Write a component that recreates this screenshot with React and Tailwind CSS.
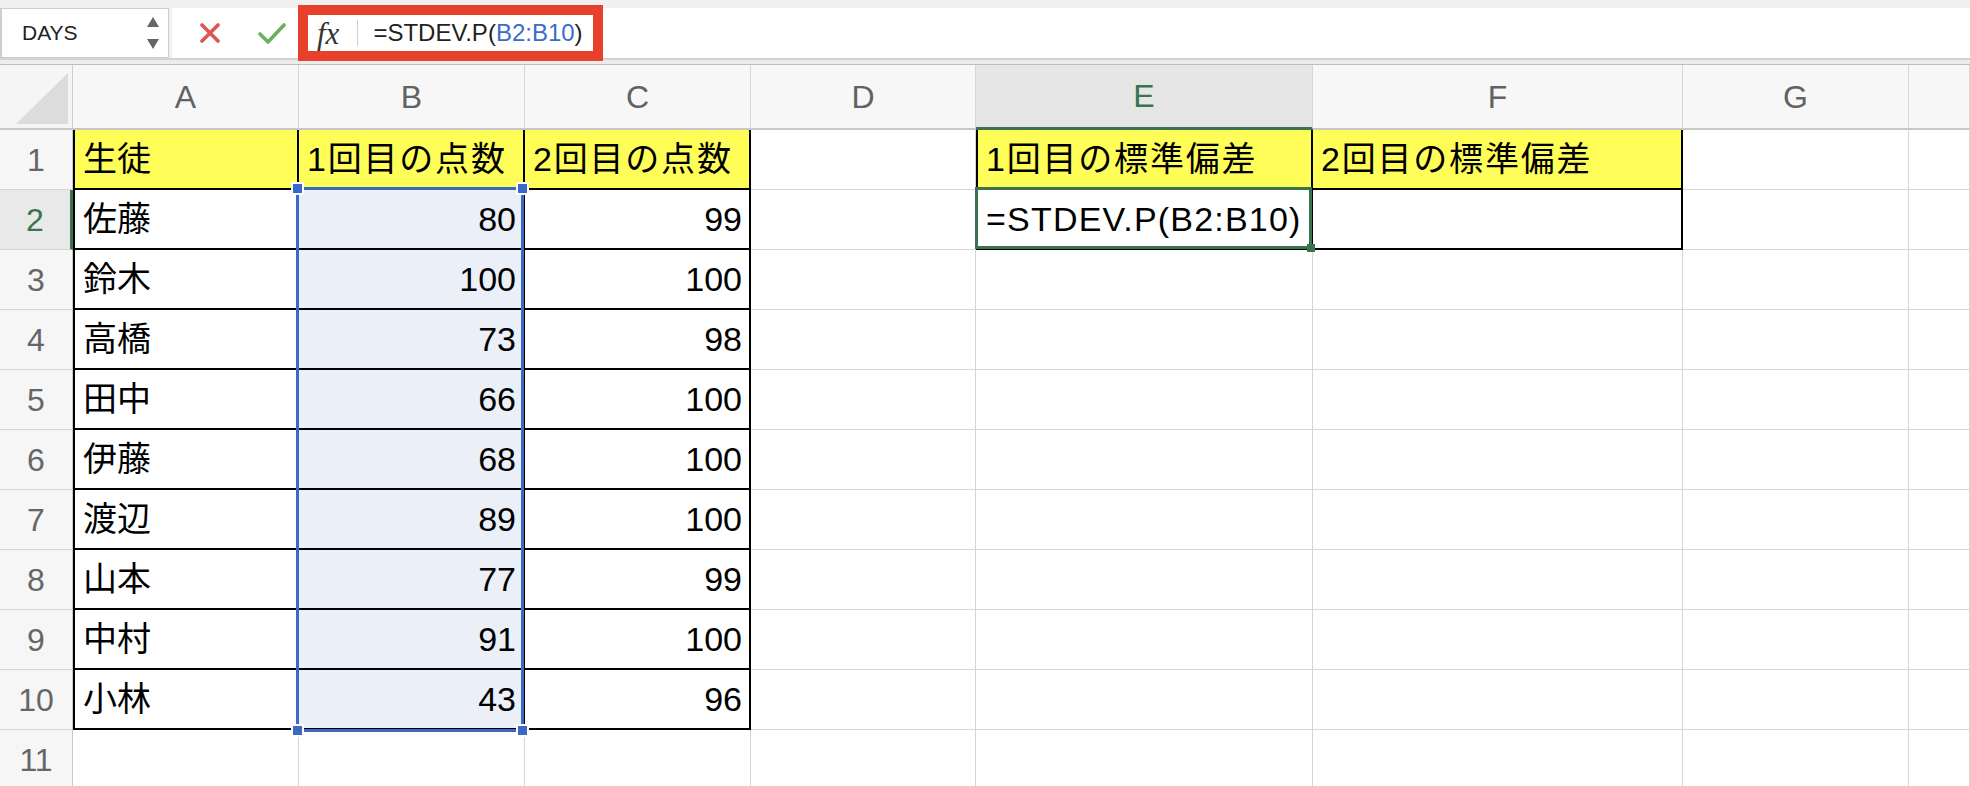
import React from "react";

const colWidths = "grid-cols-[73px_226px_226px_226px_225px_337px_370px_226px_1fr]";
const letters = ["A", "B", "C", "D", "E", "F", "G", ""];

const table = [
  ["生徒", "1回目の点数", "2回目の点数"],
  ["佐藤", "80", "99"],
  ["鈴木", "100", "100"],
  ["高橋", "73", "98"],
  ["田中", "66", "100"],
  ["伊藤", "68", "100"],
  ["渡辺", "89", "100"],
  ["山本", "77", "99"],
  ["中村", "91", "100"],
  ["小林", "43", "96"],
];

const cellFont = "font-['Liberation_Sans','Noto_Sans_CJK_JP',sans-serif] text-[34px] leading-none text-black";

function Toolbar() {
  return (
    <div className="h-[65px] bg-[#f0f0f0] pt-2">
      <div className="flex h-[50px]">
        <div className="flex w-[169px] items-center justify-between border border-l-2 border-[#cdcdcd] bg-white pl-[20px] pr-[8px]">
          <span className="font-['Liberation_Sans',sans-serif] text-[21px] text-[#222]">DAYS</span>
          <svg width="14" height="34" viewBox="0 0 14 34">
            <path d="M7 1 L13 11 L1 11 Z" fill="#666" />
            <path d="M1 23 L13 23 L7 33 Z" fill="#666" />
          </svg>
        </div>
        <div className="w-[3px] bg-[#f0f0f0]" />
        <div className="flex w-[126px] items-center bg-white pl-[28px]">
          <svg width="20" height="20" viewBox="0 0 20 20">
            <path d="M2 2 L18 18 M18 2 L2 18" stroke="#dc5750" strokeWidth="3.6" strokeLinecap="round" />
          </svg>
          <svg className="ml-[38px]" width="28" height="22" viewBox="0 0 28 22">
            <path d="M2 12 L10 20 L26 3" stroke="#6cb05f" strokeWidth="3.6" fill="none" strokeLinecap="round" strokeLinejoin="round" />
          </svg>
        </div>
        <div className="flex flex-1 items-center bg-white">
          <div className="-my-[3px] flex h-[56px] w-[305px] items-center border-[10px] border-[#e8412b] bg-white pl-[9px]">
            <span className="font-['Liberation_Serif',serif] text-[31px] italic leading-none text-[#333]">fx</span>
            <div className="ml-[18px] h-[26px] w-px bg-[#cfcfcf]" />
            <span className="ml-[15px] font-['Liberation_Sans',sans-serif] text-[24px] leading-none text-[#222]">
              =STDEV.P(<span className="text-[#3a6cc8]">B2:B10</span>)
            </span>
          </div>
        </div>
      </div>
      <div className="h-[7px] border-t-2 border-b border-t-[#d2d2d2] border-b-[#bdbdbd] bg-[#ececec]" />
    </div>
  );
}

function HeaderRow() {
  return (
    <>
      <div className="relative border-r border-b-2 border-r-[#cfcfcf] border-b-[#c8c8c8] bg-[#f5f5f5]">
        <svg className="absolute inset-0" width="73" height="63" viewBox="0 0 73 63">
          <path d="M16 59 L68 59 L68 8 Z" fill="#dcdcdc" />
        </svg>
      </div>
      {letters.map((l, i) => {
        const active = l === "E";
        return (
          <div
            key={i}
            className={`flex items-center justify-center border-r border-r-[#d6d6d6] font-['Liberation_Sans',sans-serif] text-[32px] leading-none ${
              active
                ? "border-b-[3px] border-b-[#3b7350] bg-[#e6e6e6] text-[#3b7350]"
                : "border-b-2 border-b-[#c8c8c8] bg-[#f7f7f7] text-[#626262]"
            }`}
          >
            {l}
          </div>
        );
      })}
    </>
  );
}

function cellClass(r, c) {
  // r: sheet row 1..11, c: 0..7 (A..H)
  const inTable = c <= 2 && r <= 10;
  const inStats = (c === 4 || c === 5) && r <= 2;
  let cls = "relative flex items-center ";
  if (inTable || inStats) {
    cls += "border-r-2 border-b-2 border-black ";
    if ((inTable && c === 0) || (inStats && c === 4)) cls += "border-l-2 ";
  } else {
    cls += "border-r border-b border-[#d6d6d6] ";
  }
  if (r === 1 && (inTable || inStats)) cls += "bg-[#fffd57] ";
  else if (c === 1 && r >= 2 && r <= 10) cls += "bg-[#ebeff8] ";
  else cls += "bg-white ";
  return cls;
}

function Row({ r }) {
  const data = table[r - 1];
  const cells = [];
  for (let c = 0; c < 8; c++) {
    let content = null;
    let align = "pl-[8px]";
    if (data && c <= 2) {
      content = data[c];
      if (r > 1 && c > 0) align = "justify-end pr-[7px]";
    }
    if (r === 1 && c === 4) content = "1回目の標準偏差";
    if (r === 1 && c === 5) content = "2回目の標準偏差";
    if (r === 2 && c === 4) content = "=STDEV.P(B2:B10)";
    let spacing = "";
    if (r === 1 && c > 0) spacing = "tracking-[1.8px]";
    if (r === 2 && c === 4) spacing = "tracking-[1.2px]";
    cells.push(
      <div key={c} className={`${cellClass(r, c)} ${align} ${cellFont} ${spacing}`}>
        {content}
        {r === 2 && c === 1 && (
          <div className="pointer-events-none absolute -left-[3px] -top-[3px] z-10 h-[545px] w-[calc(100%+4px)] border-[3px] border-[#3c68c6]">
            <div className="absolute -left-[8px] -top-[8px] h-[13px] w-[13px] border-2 border-white bg-[#3c68c6]" />
            <div className="absolute -right-[8px] -top-[8px] h-[13px] w-[13px] border-2 border-white bg-[#3c68c6]" />
            <div className="absolute -bottom-[8px] -left-[8px] h-[13px] w-[13px] border-2 border-white bg-[#3c68c6]" />
            <div className="absolute -bottom-[8px] -right-[8px] h-[13px] w-[13px] border-2 border-white bg-[#3c68c6]" />
          </div>
        )}
        {r === 2 && c === 4 && (
          <div className="pointer-events-none absolute -left-[3px] -top-[3px] z-10 h-[calc(100%+4px)] w-[calc(100%+4px)] border-[3px] border-[#3b7350]">
            <div className="absolute -bottom-[6px] -right-[6px] h-[8px] w-[8px] bg-[#3b7350]" />
          </div>
        )}
      </div>
    );
  }
  const active = r === 2;
  return (
    <>
      <div
        className={`flex items-center justify-center border-b border-b-[#d6d6d6] font-['Liberation_Sans',sans-serif] text-[32px] leading-none ${
          active
            ? "border-r-[3px] border-r-[#3b7350] bg-[#e9e9e9] text-[#3b7350]"
            : "border-r border-r-[#c8c8c8] bg-[#f6f6f6] text-[#666]"
        }`}
      >
        {r}
      </div>
      {cells}
    </>
  );
}

export default function App() {
  return (
    <div className="h-[786px] w-[1970px] overflow-hidden bg-white">
      <Toolbar />
      <div className={`grid ${colWidths} grid-rows-[65px_repeat(11,60px)]`}>
        <HeaderRow />
        {Array.from({ length: 11 }, (_, i) => (
          <Row key={i} r={i + 1} />
        ))}
      </div>
    </div>
  );
}
